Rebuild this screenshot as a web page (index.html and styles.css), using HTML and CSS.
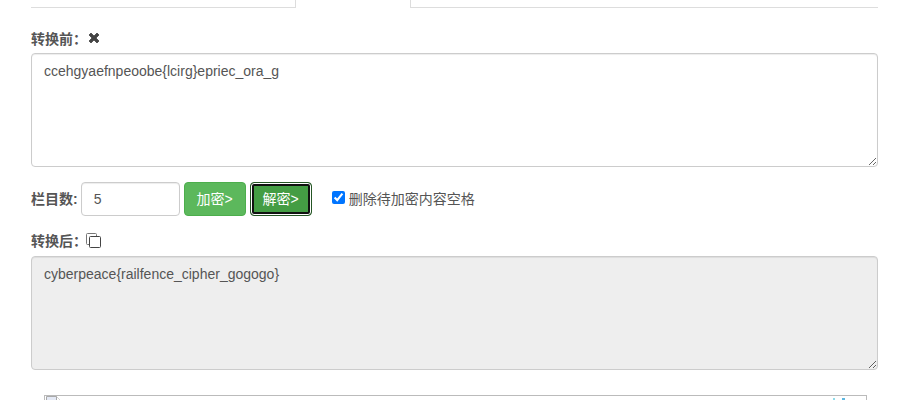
FILE: index.html
```html
<!DOCTYPE html>
<html lang="zh-CN">
<head>
  <meta charset="UTF-8">
  <meta name="viewport" content="width=device-width, initial-scale=1.0">
  <title>栅栏密码</title>
  <link rel="stylesheet" href="styles.css">
</head>
<body>

<div class="tabs-end">
  <div class="tab-left"></div>
  <div class="tab-right"></div>
</div>

<div class="field-label label-before">
  <span>转换前：</span>
  <svg class="icon-clear" viewBox="0 0 12 12" width="12" height="12">
    <path d="M3 1 L6 4 L9 1 L11 3 L8 6 L11 9 L9 11 L6 8 L3 11 L1 9 L4 6 L1 3 Z" fill="#444" stroke="#444" stroke-width="0.8" stroke-linejoin="round"/>
  </svg>
</div>
<textarea class="text-box">ccehgyaefnpeoobe{lcirg}epriec_ora_g</textarea>

<div class="controls">
  <label class="rows-label" for="rows">栏目数:</label>
  <input class="rows-input" type="text" id="rows" value="5">
  <button class="btn">加密&gt;</button>
  <button class="btn btn-active">解密&gt;</button>
  <label class="check-label"><input type="checkbox" checked>删除待加密内容空格</label>
</div>

<div class="field-label label-after">
  <span>转换后：</span>
  <svg class="icon-copy" viewBox="0 0 15 15" width="15" height="15">
    <path d="M3 11.5 H1.5 Q0.5 11.5 0.5 10.5 V1.5 Q0.5 0.5 1.5 0.5 H9.5 Q10.5 0.5 10.5 1.5 V3" fill="none" stroke="#777"/>
    <rect x="3.5" y="3.5" width="11" height="11" rx="1" fill="#fff" stroke="#444"/>
  </svg>
</div>
<textarea class="text-box text-box-readonly" readonly>cyberpeace{railfence_cipher_gogogo}</textarea>

<div class="frame">
  <svg class="broken-image" viewBox="0 0 16 16" width="16" height="16">
    <path d="M0.5 0.5 H10.5 L14.5 4.5 V16 H0.5 Z" fill="#e4e9f5" stroke="#a9a9a9"/>
    <path d="M10.5 0.5 V4.5 H14.5" fill="#fff" stroke="#a9a9a9"/>
  </svg>
  <span class="frame-mark mark-one"></span>
  <span class="frame-mark mark-two"></span>
</div>

</body>
</html>
```

FILE: styles.css
```css
html, body {
  height: 400px;
  overflow: hidden;
}

body {
  margin: 0;
  padding: 0 46px 0 31px;
  font-family: "Liberation Sans", "Noto Sans CJK SC", sans-serif;
  font-size: 14px;
  color: #555;
  background-color: #fff;
}

.tabs-end {
  display: flex;
  justify-content: space-between;
  height: 8px;
}

.tab-left,
.tab-right {
  box-sizing: border-box;
  height: 8px;
  border-bottom: 1px solid #ddd;
}

.tab-left {
  width: 265px;
  border-right: 1px solid #ddd;
}

.tab-right {
  width: 468px;
  border-left: 1px solid #ddd;
}

.field-label {
  display: flex;
  align-items: center;
  height: 20px;
  font-size: 14px;
  font-weight: bold;
  color: #555;
}

.label-before {
  margin-top: 20px;
  margin-bottom: 5px;
}

.label-after {
  margin-top: 14px;
  margin-bottom: 6px;
}

.icon-clear {
  margin-left: 1px;
}

.icon-copy {
  margin-left: -1px;
}

.text-box {
  display: block;
  box-sizing: border-box;
  width: 847px;
  height: 114px;
  margin: 0;
  padding: 9px 12px;
  border: 1px solid #ccc;
  border-radius: 4px;
  box-shadow: inset 0 1px 1px rgba(0, 0, 0, 0.075);
  font-family: "Liberation Sans", "Noto Sans CJK SC", sans-serif;
  font-size: 14px;
  line-height: 16px;
  color: #555;
  outline: none;
}

.text-box-readonly {
  background-color: #eee;
}

.controls {
  display: flex;
  align-items: center;
  height: 34px;
  margin-top: 15px;
}

.rows-label {
  font-size: 14px;
  font-weight: bold;
  color: #555;
  margin-right: 3px;
  padding-bottom: 3px;
}

.rows-input {
  box-sizing: border-box;
  width: 99px;
  height: 34px;
  padding: 6px 12px;
  border: 1px solid #ccc;
  border-radius: 4px;
  box-shadow: inset 0 1px 1px rgba(0, 0, 0, 0.075);
  font-family: inherit;
  font-size: 14px;
  color: #555;
}

.btn {
  box-sizing: border-box;
  height: 34px;
  width: 62px;
  margin-left: 4px;
  padding: 0 0 3px;
  border: 1px solid #4cae4c;
  border-radius: 4px;
  background-color: #5cb85c;
  color: #fff;
  font-family: inherit;
  font-size: 14px;
  cursor: pointer;
}

.btn-active {
  background-color: #449d44;
  border: 1px solid #255625;
  box-shadow: inset 0 0 0 1px #fff, inset 0 0 0 3px #111;
}

.check-label {
  display: flex;
  align-items: center;
  margin-left: 20px;
  padding-bottom: 3px;
  font-size: 14px;
  color: #555;
}

.check-label input {
  margin: 0 4px 0 0;
  width: 13px;
  height: 13px;
}

.frame {
  position: relative;
  box-sizing: border-box;
  width: 823px;
  height: 5px;
  margin: 25px 0 0 13px;
  border: 1px solid #bbb;
  border-bottom: none;
  padding: 0 0 0 1px;
  overflow: hidden;
}

.broken-image {
  display: block;
}

.frame-mark {
  position: absolute;
  top: 2px;
  width: 2px;
  height: 2px;
}

.mark-one {
  left: 788px;
  background-color: #8fdcea;
}

.mark-two {
  left: 797px;
  width: 3px;
  background-color: #5db7e0;
}
```
